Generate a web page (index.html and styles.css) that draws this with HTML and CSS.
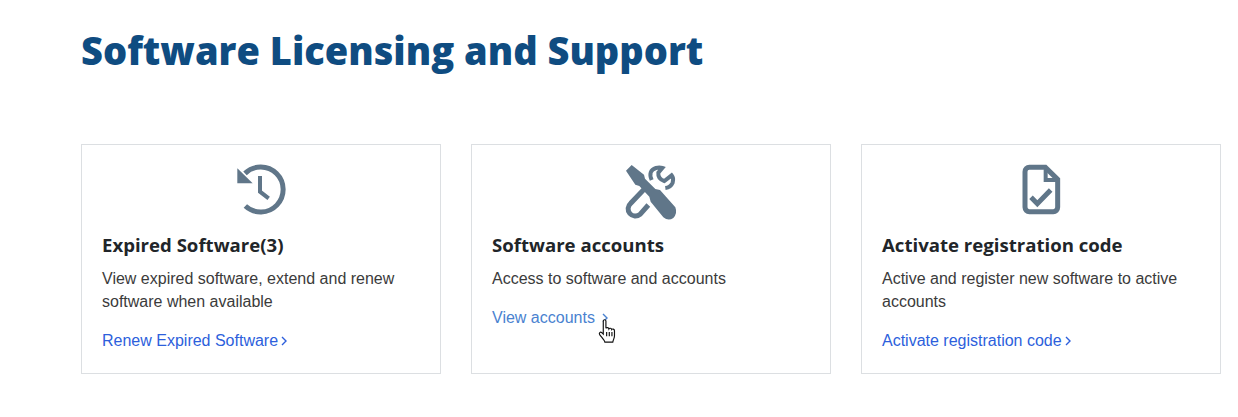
FILE: index.html
```html
<!DOCTYPE html>
<html lang="en">
<head>
  <meta charset="UTF-8" />
  <title>Software Licensing and Support</title>
  <link rel="stylesheet" href="styles.css">
</head>
<body>

  <main>
    <h1>Software Licensing and Support</h1>

    <div class="cards">
      <div class="card">
        <svg class="icon" viewBox="3 0 240 240">
          <path class="line" d="M75 70A67.5 67.5 0 1 1 76 168" />
          <path class="solid" d="M52 55V100H98Z" />
          <path class="line thin" d="M120 78V125L146 145" />
        </svg>
        <h2>Expired Software(3)</h2>
        <p>View expired software, extend and renew software when available</p>
        <a class="more" href="#">Renew Expired Software<svg class="chevron" viewBox="0 0 6 10"><path d="M1 1L5 5L1 9" /></svg></a>
      </div>

      <div class="card">
        <svg class="icon" viewBox="3 0 240 240">
          <path class="solid" d="M48 62L65 45L102 74L105 86L136 117L150 120L196 172Q203 190 190 204Q175 214 160 202L122 155L118 140L88 108L76 104Z" />
          <path class="line" d="M103 117L62 160A20 20 0 0 0 90 193L115 165" />
          <path class="line thin" d="M125 90Q113 62 138 54Q148 51 157 54L145 68Q143 86 163 93L185 76Q192 84 188 98Q182 112 166 114" />
        </svg>
        <h2>Software accounts</h2>
        <p>Access to software and accounts</p>
        <a class="more hover" href="#">View accounts<svg class="chevron" viewBox="0 0 6 10"><path d="M1 1L5 5L1 9" /></svg></a>
        <svg class="cursor" viewBox="0 0 18 24">
          <path d="M5 2.5C5 1 7.5 1 7.5 2.5V9.5C8 8.5 10 8.5 10.3 10C10.8 9 12.7 9.2 13 10.6C13.6 9.8 15.6 10 15.6 11.8V16.5C15.6 19 14.5 20 14 22.5H6.5C6 20.5 3 17.5 1.6 15.5C.6 14 2.2 12.4 3.6 13.6L5 15Z" />
          <path d="M8.2 13V17M10.7 13V17M13.2 13V17" />
        </svg>
      </div>

      <div class="card">
        <svg class="icon" viewBox="3 0 240 240">
          <path class="line" d="M136 52H88A13 13 0 0 0 75 65V172A13 13 0 0 0 88 185H160A13 13 0 0 0 173 172V88Z" />
          <path class="line thin" d="M137 58V90H168" />
          <path class="line" d="M93 142L112 161L152 120" />
        </svg>
        <h2>Activate registration code</h2>
        <p>Active and register new software to active accounts</p>
        <a class="more" href="#">Activate registration code<svg class="chevron" viewBox="0 0 6 10"><path d="M1 1L5 5L1 9" /></svg></a>
      </div>
    </div>
  </main>

</body>
</html>
```

FILE: styles.css
```css
body {
  margin: 0;
  font-family: "Liberation Sans", Arial, sans-serif;
  background: white;
}

main {
  padding: 26px 0 0 81px;
}

h1 {
  margin: 0 0 69px;
  font-family: "Open Sans", sans-serif;
  font-size: 38px;
  line-height: 49px;
  font-weight: 800;
  color: #0f4c81;
}

.cards {
  display: flex;
  gap: 30px;
}

.card {
  position: relative;
  box-sizing: border-box;
  width: 360px;
  height: 230px;
  padding: 5px 20px 0;
  border: 1px solid #dcdfe2;
  text-align: left;
}

.icon {
  display: block;
  width: 80px;
  height: 80px;
  margin: 0 auto;
}

.solid {
  fill: #607689;
}

.line {
  fill: none;
  stroke: #607689;
  stroke-width: 15;
}

.thin {
  stroke-width: 12;
}

.card h2 {
  margin: 3px 0 10px;
  font-family: "Open Sans", sans-serif;
  font-size: 18.6px;
  line-height: 24px;
  font-weight: 700;
  color: #212529;
}

.card p {
  margin: 0 0 16px;
  font-size: 16px;
  line-height: 23px;
  color: #3b3b3b;
}

.more {
  font-size: 16px;
  line-height: 23px;
  color: #2d5fdc;
  text-decoration: none;
}

.chevron {
  width: 6px;
  height: 10px;
  margin-left: 3px;
  fill: none;
  stroke: currentColor;
  stroke-width: 1.4;
}

.more.hover {
  color: #4a82d0;
}

.more.hover .chevron {
  margin-left: 7px;
}

.cursor {
  position: absolute;
  left: 126px;
  top: 173px;
  width: 19px;
  height: 26px;
  fill: white;
  stroke: #111;
  stroke-width: 1.1;
}
```
